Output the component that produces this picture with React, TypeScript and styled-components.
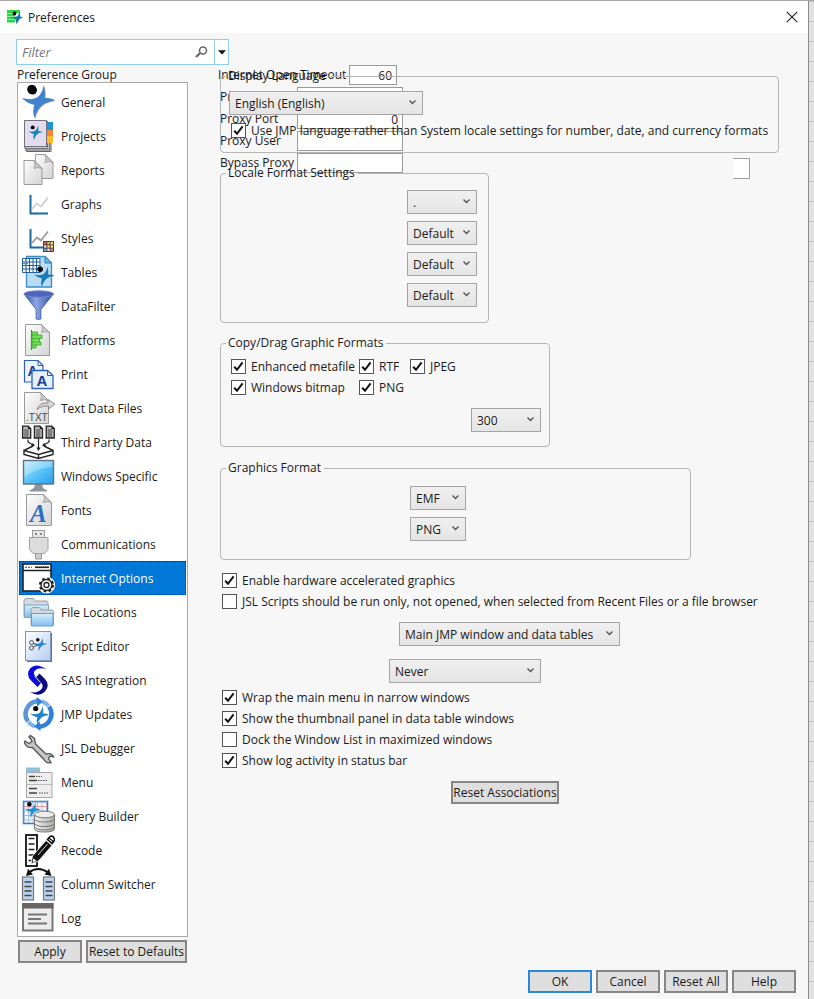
import React from "react";
import styled, { createGlobalStyle, css } from "styled-components";

const FONT = `"Open Sans", "Noto Sans", sans-serif`;

const GlobalStyle = createGlobalStyle`
  * { box-sizing: border-box; }
  html, body { margin: 0; padding: 0; }
  body, button, input, select {
    font-family: ${FONT};
    font-size: 12px;
    line-height: 18px;
    color: #1a1a1a;
  }
`;

/* ---------- window frame ---------- */

const Desktop = styled.div`
  display: flex;
  min-height: 100vh;
  border-top: 1px solid #a8a8a8;
  background: #f7f7f7;
`;

const Dialog = styled.main`
  flex: 1;
  min-width: 0;
  display: flex;
  flex-direction: column;
  background: #f7f7f7;
  border-right: 1px solid #8c8c8c;
`;

const SheetEdge = styled.div`
  width: 5px;
  background: repeating-linear-gradient(#c4c4c8 0 1px, #e2e2e2 1px 20px);
`;

const TitleBar = styled.header`
  display: flex;
  align-items: center;
  height: 32px;
  padding: 0 10px 0 7px;
  gap: 5px;
  background: #fff;
`;

const Title = styled.h1`
  flex: 1;
  margin: 0;
  padding-top: 1px;
  font-size: 12px;
  font-weight: 400;
  line-height: 18px;
`;

const CloseButton = styled.button`
  display: flex;
  padding: 0;
  border: 0;
  background: none;
`;

const FilterRow = styled.form`
  display: flex;
  width: 213px;
  height: 26px;
  margin: 6px 0 0 16px;
  border: 1px solid #90cdee;
  background: #fff;
`;

const FilterInput = styled.input`
  flex: 1;
  min-width: 0;
  padding: 0 5px;
  border: 0;
  background: none;
  font-size: 13px;
  font-style: italic;
  outline: none;
  &::placeholder { color: #757575; opacity: 1; }
`;

const FilterButton = styled.button<{ $divided?: boolean }>`
  display: flex;
  align-items: center;
  justify-content: center;
  width: ${(p) => (p.$divided ? "14px" : "26px")};
  padding: 0;
  border: 0;
  background: none;
  ${(p) => p.$divided && css`border-left: 1px solid #90cdee;`}
`;

const Columns = styled.div`
  flex: 1;
  display: flex;
  align-items: flex-start;
  gap: 32px;
  padding: 0 13px 0 17px;
`;

/* ---------- navigation ---------- */

const Sidebar = styled.nav`
  flex: none;
  width: 171px;
`;

const SidebarLabel = styled.div`
  height: 17px;
  line-height: 19px;
`;

const GroupList = styled.ul`
  margin: 0;
  padding: 2px 1px 1px;
  list-style: none;
  border: 1px solid #a9a9a9;
  background: #fff;
`;

const GroupItem = styled.button<{ $selected?: boolean }>`
  display: flex;
  align-items: center;
  gap: 6px;
  width: 100%;
  height: 34px;
  padding: 2px 0 0 2px;
  border: 0;
  background: ${(p) => (p.$selected ? "#0078d7" : "transparent")};
  color: ${(p) => (p.$selected ? "#fff" : "#1a1a1a")};
  outline: ${(p) => (p.$selected ? "1px dotted #10263c" : "none")};
  outline-offset: -1px;
  text-align: left;
  white-space: nowrap;
`;

const IconBox = styled.svg`
  flex: none;
  align-self: flex-end;
  width: 34px;
  height: 34px;
`;

const ButtonRow = styled.div`
  display: flex;
  gap: 4px;
  padding: 3px 1px 0;
`;

const PushButton = styled.button<{ $width: number; $primary?: boolean }>`
  width: ${(p) => p.$width}px;
  height: 23px;
  padding: 0;
  border: 2px solid ${(p) => (p.$primary ? "#2a88dc" : "#868686")};
  background: #dfdfdf;
  white-space: nowrap;
`;

const Footer = styled.footer`
  display: flex;
  justify-content: flex-end;
  gap: 4px;
  padding: 7px 12px 6px;
`;

/* ---------- settings ---------- */

const Settings = styled.section`
  flex: 1;
  min-width: 0;
  position: relative;
`;

const ProxyLayer = styled.div`
  position: absolute;
  top: 0;
  left: 0;
  display: flex;
  flex-direction: column;
  gap: 2px;
`;

const ProxyRow = styled.label<{ $first?: boolean }>`
  display: flex;
  align-items: center;
  height: 20px;
  margin-left: ${(p) => (p.$first ? "-2px" : "0")};
`;

const ProxyName = styled.span<{ $first?: boolean }>`
  width: ${(p) => (p.$first ? "131px" : "77px")};
  white-space: nowrap;
`;

const ProxyInput = styled.input<{ $short?: boolean }>`
  width: ${(p) => (p.$short ? "48px" : "106px")};
  height: 20px;
  padding: 0 4px;
  border: 1px solid #9a9a9a;
  background: #fff;
  text-align: right;
`;

const Content = styled.div`
  position: relative;
  z-index: 1;
  display: flex;
  flex-direction: column;
  align-items: flex-start;
`;

const Group = styled.fieldset<{ $width: number; $top: number; $pad: string }>`
  width: 100%;
  max-width: ${(p) => p.$width}px;
  min-width: 0;
  margin: ${(p) => p.$top}px 0 0;
  padding: ${(p) => p.$pad};
  border: 1px solid #b6b6b6;
  border-radius: 4px;
`;

const GroupTitle = styled.legend`
  margin-left: -3px;
  padding: 0 3px 0 2px;
  line-height: 18px;
  white-space: nowrap;
`;

const LocaleRow = styled.div`
  display: flex;
  align-items: flex-start;
  width: 100%;
`;

const ClippedInput = styled.input`
  width: 17px;
  height: 21px;
  margin: 5px 0 0 244px;
  padding: 0;
  border: 1px solid #a0a0a0;
  border-left: 0;
  background: #fff;
`;

const Stack = styled.div`
  display: flex;
  flex-direction: column;
  align-items: flex-start;
  gap: 7px;
`;

const SelectFrame = styled.span<{ $width: number }>`
  position: relative;
  display: block;
  width: ${(p) => p.$width}px;
  height: 24px;
  svg {
    position: absolute;
    top: 8px;
    right: 6px;
    pointer-events: none;
  }
`;

const SelectControl = styled.select`
  appearance: none;
  display: block;
  width: 100%;
  height: 100%;
  padding: 1px 0 0 5px;
  border: 1px solid #a5a5a5;
  border-radius: 0;
  background: linear-gradient(#f0f0f0, #e5e5e5);
`;

const CheckLabel = styled.label`
  display: flex;
  align-items: center;
  gap: 5px;
  height: 21px;
  white-space: nowrap;
`;

const CheckFrame = styled.span`
  position: relative;
  display: block;
  width: 15px;
  height: 15px;
  svg {
    position: absolute;
    inset: 0;
    visibility: hidden;
    pointer-events: none;
  }
  input:checked + svg { visibility: visible; }
`;

const CheckInput = styled.input`
  appearance: none;
  display: block;
  width: 15px;
  height: 15px;
  margin: 0;
  border: 1px solid #555;
  background: #fff;
`;

const LanguageBody = styled.div`
  display: flex;
  flex-direction: column;
  gap: 5px;
`;

const CheckInset = styled.div`
  padding-left: 2px;
`;

const FormatGrid = styled.div`
  display: grid;
  grid-template-columns: 128px 51px auto;
  justify-content: start;
  padding: 0 0 10px 2px;
`;

const Indent = styled.div<{ $left: number; $top?: number }>`
  margin: ${(p) => p.$top ?? 0}px 0 0 ${(p) => p.$left}px;
`;

const CheckStack = styled.div<{ $top: number }>`
  margin: ${(p) => p.$top}px 0 0 2px;
`;

function Select({ width, value, label }: { width: number; value: string; label: string }) {
  return (
    <SelectFrame $width={width}>
      <SelectControl aria-label={label} defaultValue={value}>
        <option>{value}</option>
      </SelectControl>
      <svg width="9" height="7" viewBox="0 0 9 7" aria-hidden="true">
        <path d="M1.5 1.5 4.5 4.5 7.5 1.5" fill="none" stroke="#555" strokeWidth="1.4" />
      </svg>
    </SelectFrame>
  );
}

function Check({ text, on = true }: { text: string; on?: boolean }) {
  return (
    <CheckLabel>
      <CheckFrame>
        <CheckInput type="checkbox" defaultChecked={on} />
        <svg width="15" height="15" viewBox="0 0 15 15" aria-hidden="true">
          <path d="M3.2 7.8 6 10.8 11.6 3.4" fill="none" stroke="#111" strokeWidth="2" />
        </svg>
      </CheckFrame>
      {text}
    </CheckLabel>
  );
}

/* ---------- icons, drawn in a 34 x 34 box ---------- */

function Figure({ at, fill = "#3f7fc9" }: { at?: string; fill?: string }) {
  return (
    <g transform={at}>
      <path
        d="M1 13Q13 16 18 11Q22 6 22.5 0Q24.5 7 23.5 13Q29 12.5 34 15Q26 16.5 22 19Q15.5 24 13.5 33Q11 26 13.5 19.5Q6 18 1 13Z"
        fill={fill}
      />
      <circle cx="10.7" cy="4.3" r="4.5" fill="#050505" />
    </g>
  );
}

function Page({ x, y, w, h, id }: { x: number; y: number; w: number; h: number; id: string }) {
  const f = 8;
  return (
    <g>
      <linearGradient id={id} x1="0" y1="0" x2="1" y2="1">
        <stop offset="0" stopColor="#fdfdfd" />
        <stop offset="1" stopColor="#d4d4d4" />
      </linearGradient>
      <path
        d={`M${x} ${y}h${w - f}l${f} ${f}v${h - f}h${-w}z`}
        fill={`url(#${id})`}
        stroke="#9a9a9a"
        strokeWidth="1"
      />
      <path d={`M${x + w - f} ${y}q2 4 0 ${f}q4-2 ${f} 0z`} fill="#c9c9c9" stroke="#8e8e8e" strokeWidth=".7" />
    </g>
  );
}

const AXES = <path d="M9.5 8V26.5H27" fill="none" stroke="#176a9c" strokeWidth="2" />;

const grid = (x: number, y: number, w: number, h: number, s: number) => {
  let d = "";
  for (let i = x; i <= x + w; i += s) d += `M${i} ${y}v${h}`;
  for (let j = y; j <= y + h; j += s) d += `M${x} ${j}h${w}`;
  return d;
};

const ICONS: Record<string, React.ReactNode> = {
  General: (
    <>
      <Figure at="translate(.8 .8)" fill="#8b97a8" />
      <Figure fill="#3f82d0" />
    </>
  ),
  Projects: (
    <>
      <path d="M3.5 28l2 4.5H30V6L26 2z" fill="#c8c8c8" stroke="#666" />
      <path d="M4 29.5h22.5V4M5 31h23.5V5" fill="none" stroke="#777" />
      <rect x="26" y="3" width="6" height="8" fill="#2293d6" />
      <rect x="26" y="11" width="6" height="6" fill="#f58634" />
      <rect x="26" y="17" width="6" height="7" fill="#fdbb2c" />
      <rect x="3.5" y="1.5" width="22" height="26" fill="#e2dcec" stroke="#77727f" />
      <Figure at="translate(7 6.5) scale(.44)" fill="#1583bb" />
    </>
  ),
  Reports: (
    <>
      <Page x={14.5} y={1.5} w={17.5} h={24} id="rep1" />
      <Page x={3} y={7.5} w={18} h={24} id="rep2" />
    </>
  ),
  Graphs: (
    <>
      {AXES}
      <path d="M11 22l5-5.5 4 3L27 10.5" fill="none" stroke="#c9c9c9" strokeWidth="1.5" />
    </>
  ),
  Styles: (
    <>
      {AXES}
      <path d="M11 22l5-5.5 4 3L27 10.5" fill="none" stroke="#999" strokeWidth="1.7" />
      <rect x="22" y="20" width="11" height="11" fill="#4a4343" />
      {[
        ["#e05a4c", "#f2a74b", "#f7e36b"],
        ["#ddd", "#f0cf5b", "#efdc84"],
        ["#7d9fe0", "#e8e8e8", "#e6806e"],
      ].map((row, r) =>
        row.map((c, i) => <rect key={`${r}${i}`} x={23 + i * 3.3} y={21 + r * 3.3} width="2.4" height="2.4" fill={c} />)
      )}
    </>
  ),
  Tables: (
    <>
      <path d="M5.5 1.5H24L30.5 8V32H5.5z" fill="#b9dcf5" stroke="#3b8cc8" strokeWidth="1.3" />
      <path d="M24 1.5V8h6.5z" fill="#6fb3e0" stroke="#2f7fb9" />
      <rect x="1" y="3" width="19" height="15" fill="#fff" />
      <path d={grid(1.5, 3.5, 18, 14, 3.5)} stroke="#1f5f9c" strokeWidth="1" fill="none" />
      <path d="M2 8.5h5M4.500 4v8" stroke="#e25b5b" />
      <Figure at="translate(12.5 11.5) scale(.62)" fill="#1a79b5" />
    </>
  ),
  DataFilter: (
    <>
      <linearGradient id="fun" x1="0" x2="1">
        <stop offset="0" stopColor="#2f4f9f" />
        <stop offset=".4" stopColor="#8fa6e4" />
        <stop offset="1" stopColor="#2f4fa6" />
      </linearGradient>
      <path d="M3 5L15 20.5V30q2.5 1 5 0V20.5L32.5 5z" fill="url(#fun)" stroke="#3c56a3" strokeWidth=".7" />
      <ellipse cx="17.7" cy="5" rx="14.8" ry="3.2" fill="#4c66bb" stroke="#7288c9" />
    </>
  ),
  Platforms: (
    <>
      <Page x={4.5} y={1.5} w={24} h={31} id="pla" />
      <path d="M10.5 7v20" stroke="#2f9a2b" strokeWidth="1.2" />
      <path d="M11 9h5.5v3H21v3.5h-2.5V19H20v3h-5v3h-4z" fill="#76df57" stroke="#3cae33" strokeWidth=".9" />
      <path d="M11 12h6M11 15.5h8M11 19h8M11 22h5" stroke="#3cae33" strokeWidth=".9" />
    </>
  ),
  Print: (
    <>
      <path d="M3.5 3.5H17l5 5v16.5H3.5z" fill="#eef4ff" stroke="#2e5fbb" strokeWidth="1.2" />
      <path d="M17 3.5v5h5" fill="none" stroke="#2e5fbb" />
      <text x="6.5" y="19" fontFamily="Liberation Sans" fontWeight="700" fontSize="14" fill="#173f8f">A</text>
      <path d="M11 13.5H26.500l5.500 5V31.500H11z" fill="#e6f0ff" stroke="#2e5fbb" strokeWidth="1.3" />
      <path d="M26.5 13.5v5H32" fill="none" stroke="#2e5fbb" />
      <text x="15.5" y="29" fontFamily="Liberation Sans" fontWeight="700" fontSize="15" fill="#173f8f">A</text>
    </>
  ),
  "Text Data Files": (
    <>
      <Page x={3.5} y={1.5} w={24} h={31} id="txt" />
      <path d="M16 18.5Q18 11.5 27 12V8.500L34 13l-6.500 5V15Q20 14.500 16 18.500Z" fill="#d8d8d8" stroke="#777" strokeWidth=".8" />
      <text x="5" y="29.5" fontFamily="Liberation Sans" fontSize="10" fill="#4a4a4a">.TXT</text>
    </>
  ),
  "Third Party Data": (
    <>
      {[1, 12.8, 24.6].map((x) => (
        <g key={x} transform={`translate(${x} .5)`}>
          <path d="M.6.6h5.5l2.6 2.6V12.5H.6z" fill="#bbb" stroke="#222" strokeWidth="1.3" />
          <path d="M6 0v3.5h3.5" fill="#222" />
          <path d="M2.2 4.5h4.5M2.2 6.5h4.5M2.2 8.5h4.5M2.2 10.5h4.5" stroke="#333" strokeWidth=".9" />
        </g>
      ))}
      <path d="M7 14.5v2.5l5 3M28 14.5v2.5l-5 3M17.5 13.5V24" fill="none" stroke="#222" strokeWidth="1.2" />
      <path d="M14 21l-4 .3 1.8-3.5zM21 21l4 .3-1.8-3.5zM17.5 26l-2.200-3.500h4.400z" fill="#222" />
      <path d="M3 25.5l9-4.5M32 25.5L23 21M3 25.5l14.500 4L32 25.500v4L17.500 33.500 3 29.500zM17.500 29.500v4" fill="none" stroke="#222" strokeWidth="1.4" />
    </>
  ),
  "Windows Specific": (
    <>
      <linearGradient id="win" x1="0" y1="0" x2="1" y2="1">
        <stop offset="0" stopColor="#b8ecfd" />
        <stop offset=".5" stopColor="#5bc5f8" />
        <stop offset="1" stopColor="#2a9fee" />
      </linearGradient>
      <path d="M14 25h7l1 4 4 2.5v1H8.5v-1l4.5-2.5z" fill="#8c969e" />
      <rect x="2.5" y="1.5" width="30" height="23.5" fill="url(#win)" stroke="#62737f" strokeWidth="1.4" />
      <path d="M3.5 2.5h28V8Q14 9 3.5 18z" fill="#fff" opacity=".28" />
    </>
  ),
  Fonts: (
    <>
      <Page x={5.5} y={1.5} w={25} h={31} id="fon" />
      <text x="9" y="29" fontFamily="Liberation Serif" fontStyle="italic" fontWeight="700" fontSize="25" fill="#2b6fc6">A</text>
    </>
  ),
  Communications: (
    <>
      <path d="M14.5 25h6v7h-6z" fill="#cfcfcf" stroke="#999" />
      <rect x="11.5" y="3.5" width="12" height="8" fill="#e6e6e6" stroke="#999" />
      <path d="M14 6h2v2h-2zM19 6h2v2h-2z" fill="#888" />
      <path d="M8.5 10.5h18.5v12l-3.5 4H12l-3.500-4z" fill="#dcdcdc" stroke="#a2a2a2" />
    </>
  ),
  "Internet Options": (
    <>
      <rect x="2" y="3" width="28" height="27" fill="#fff" stroke="#222" strokeWidth="1.6" />
      <path d="M2 9.5h28" stroke="#222" strokeWidth="1.5" />
      <path d="M4 6.3h7" stroke="#444" strokeDasharray="2 1" />
      <path d="M14 6.3h14" stroke="#222" strokeWidth="1.6" />
      <circle cx="25.5" cy="24" r="8.6" fill="#fff" />
      <circle cx="25.5" cy="24" r="6.400" fill="none" stroke="#222" strokeWidth="2.4" strokeDasharray="2.600 2.426" />
      <circle cx="25.5" cy="24" r="5.500" fill="#fff" stroke="#222" strokeWidth="1.400" />
      <circle cx="25.5" cy="24" r="2.500" fill="#fff" stroke="#222" strokeWidth="1.300" />
    </>
  ),
  "File Locations": (
    <>
      <linearGradient id="fol" x1="0" y1="0" x2="0" y2="1">
        <stop offset="0" stopColor="#d9effc" />
        <stop offset="1" stopColor="#7fbdf0" />
      </linearGradient>
      <path d="M3 22V5l1.5-1.5h8L14 6h12l1 1.5V22z" fill="#d3d9dd" stroke="#98a2a9" />
      <path d="M3.5 10h24v12.500h-24z" fill="url(#fol)" stroke="#80a7c7" />
      <path d="M10 30V14l1.5-1.5h7L20 15h11.500l1 1.500V30z" fill="#d3d9dd" stroke="#98a2a9" />
      <path d="M10.5 18.5h21.500V31H10.500z" fill="url(#fol)" stroke="#6a9fce" />
    </>
  ),
  "Script Editor": (
    <>
      <linearGradient id="scr" x1="0" y1="0" x2="1" y2="1">
        <stop offset="0" stopColor="#fff" />
        <stop offset="1" stopColor="#b5cff2" />
      </linearGradient>
      <rect x="6" y="4" width="25" height="29" fill="#62729b" />
      <rect x="4.5" y="2.5" width="25" height="29" fill="url(#scr)" stroke="#8496bf" />
      <circle cx="10.5" cy="13.5" r="2" fill="none" stroke="#555" />
      <circle cx="10.5" cy="19" r="2" fill="none" stroke="#555" />
      <path d="M12 18l10-4M12 14.5l7 2.5" stroke="#555" />
      <Figure at="translate(12.5 9) scale(.4)" fill="#2a86c8" />
    </>
  ),
  "SAS Integration": (
    <>
      <path d="M25 6Q15 -.5 9.500 5Q4 11.500 10.500 18L16.500 24L20.500 19.500L14.500 13.500Q11.500 10 14 7.500Q17.500 4 25 6Z" fill="#0a0ae0" />
      <path d="M9 29Q18 34.500 24 28.500Q29.500 22 24 16L18.500 10.500L15 14.500L20 19.500Q23 23 20.500 26Q16.500 30.500 9 29Z" fill="#0b0b80" />
      <path d="M16.500 9.500L14 13.500 19.500 19.500" fill="none" stroke="#fff" strokeWidth=".9" />
    </>
  ),
  "JMP Updates": (
    <>
      <path d="M7 24.5A12.800 12.800 0 0 1 16.500 4.300" fill="none" stroke="#5b97d8" strokeWidth="4.600" />
      <path d="M28 9.500A12.800 12.800 0 0 1 18.500 29.700" fill="none" stroke="#2f7fdb" strokeWidth="4.600" />
      <path d="M7.500 25A12.800 12.800 0 0 0 14 29.500" fill="none" stroke="#7eb2ea" strokeWidth="4" />
      <path d="M27.500 9A12.800 12.800 0 0 0 21 4.500" fill="none" stroke="#7eb2ea" strokeWidth="4" />
      <path d="M15.500 0l6.500 4.500-6 5zM19.500 34l-6.500-4.500 6-5z" fill="#2f7fdb" />
      <Figure at="translate(8.500 9) scale(.58)" fill="#2383c4" />
    </>
  ),
  "JSL Debugger": (
    <path
      d="M9.500 4.500L13.500 7.500 14.500 13 25 23Q31 21.500 32.500 26L29 25 27.500 27.500 30 31.500Q25.500 33 22.500 28L11.500 16.500Q6 17.500 3.500 12L4 10 8 12.500 11 10.500 9.500 7.500 8 6z"
      fill="#c6c6c6"
      stroke="#5a5a5a"
      strokeWidth="1.400"
    />
  ),
  Menu: (
    <>
      <rect x="5" y="2.500" width="14" height="6" fill="#8fc1da" />
      <rect x="5.500" y="7.500" width="25.500" height="25" fill="#eee" stroke="#a9a9a9" />
      <path d="M6 19.500h25" stroke="#bbb" />
      <path d="M8 11.500h6M8 15.500h8M8 23.500h8M8 28h8" stroke="#444" strokeWidth="1.500" />
      <path d="M15 11.500h6M17 15.500h9M18 28h9" stroke="#555" strokeDasharray="1.500 1" />
    </>
  ),
  "Query Builder": (
    <>
      <linearGradient id="cyl" x1="0" x2="1">
        <stop offset="0" stopColor="#f5f5f5" />
        <stop offset="1" stopColor="#aaa" />
      </linearGradient>
      <rect x="2.500" y="2.500" width="24" height="22" fill="#f4faff" stroke="#2e7fc4" strokeWidth="1.600" />
      <path d={grid(3, 3, 23, 21, 4.5)} stroke="#a5a9cf" strokeWidth=".8" fill="none" />
      <path d="M3 7.500h23" stroke="#e59a9a" />
      <Figure at="translate(3 3) scale(.5)" fill="#2591d6" />
      <path d="M13.500 15.500v14q0 3.500 10 3.500t10-3.500v-14z" fill="url(#cyl)" stroke="#777" />
      <ellipse cx="23.500" cy="15.500" rx="10" ry="3.300" fill="#ededed" stroke="#777" />
      <path d="M13.500 20q2 3 10 3t10-3M13.500 24.500q2 3 10 3t10-3M13.500 28q2 3 10 3t10-3" fill="none" stroke="#777" />
    </>
  ),
  Recode: (
    <>
      <rect x="5" y="2" width="11" height="31" fill="#fff" stroke="#111" strokeWidth="1.800" />
      <path d="M7.500 5.500h6M7.500 11h6M7.500 16.500h6M7.500 22h6M7.500 27.500h3" stroke="#222" strokeWidth="1.300" />
      <path d="M10 31l1.500-8L25 7.500l6 5L17.500 28z" fill="#111" stroke="#fff" strokeWidth=".8" />
      <path d="M11.500 29.500l1-4 3 2.300z" fill="#fff" />
      <path d="M26.500 6.500l2.500-3q1.500-1 3 0l1 1.500q1 1.500 0 2.700l-2 2.800z" fill="#fff" stroke="#111" strokeWidth="1.600" />
      <path d="M28 5l5 4" stroke="#111" strokeWidth="1.200" />
      <path d="M17 22l9.500-11" stroke="#fff" strokeWidth=".8" />
    </>
  ),
  "Column Switcher": (
    <>
      {[1.5, 22.5].map((x) => (
        <g key={x}>
          <rect x={x} y="10" width="11" height="23" fill="#b9d2ee" stroke="#777" strokeWidth="1.200" />
          <path d={`M${x + 2} 15h7M${x + 2} 19.500h7M${x + 2} 24h7M${x + 2} 28.500h7`} stroke="#444" strokeWidth="1.500" />
        </g>
      ))}
      <path d="M8 5.500Q17 -1.500 27 5.500" fill="none" stroke="#111" strokeWidth="1.800" />
      <path d="M5 9L7 1.800l5 5.700zM30.500 9L28 1.800 23.500 7.500z" fill="#111" />
    </>
  ),
  Log: (
    <>
      <rect x="2" y="3" width="29.500" height="26.500" fill="#ededed" stroke="#777" strokeWidth="2" />
      <rect x="1" y="2" width="31.500" height="5.500" fill="#666" />
      <path d="M7 13.500h19M7 18h13M7 22.500h19" stroke="#777" strokeWidth="1.900" />
    </>
  ),
};

const SELECTED = "Internet Options";

export default function App() {
  return (
    <>
      <GlobalStyle />
      <Desktop>
        <Dialog>
          <TitleBar>
            <svg width="16" height="16" viewBox="0 0 16 16" aria-hidden="true">
              <path d="M0 1h13v3H0zM0 4.500h8v2.800H0zM0 7.800h10v2.800H0zM0 11h8v2.500H0z" fill="#2fd14b" />
              <path d="M4 7.500Q9 9 11 6.500L13 2.500 13.200 7.500 16 8.500 12.500 10 9.500 15.500 8.800 10.300Z" fill="#1573b5" />
              <circle cx="7.500" cy="4.500" r="1.900" fill="#050505" />
            </svg>
            <Title>Preferences</Title>
            <CloseButton type="button" aria-label="Close">
              <svg width="12" height="12" viewBox="0 0 12 12">
                <path d="M.8.8 11.200 11.200M11.200.8.8 11.200" stroke="#222" strokeWidth="1.100" />
              </svg>
            </CloseButton>
          </TitleBar>

          <FilterRow onSubmit={(e) => e.preventDefault()}>
            <FilterInput placeholder="Filter" aria-label="Filter" />
            <FilterButton type="submit" aria-label="Search">
              <svg width="13" height="12" viewBox="0 0 13 12">
                <circle cx="8" cy="4.500" r="3.500" fill="none" stroke="#666" strokeWidth="1.600" />
                <path d="M5.300 7 1 11" stroke="#666" strokeWidth="2.200" />
              </svg>
            </FilterButton>
            <FilterButton type="button" $divided aria-label="Filter options">
              <svg width="8" height="5" viewBox="0 0 8 5">
                <path d="M0 .3h8L4 4.500z" fill="#111" />
              </svg>
            </FilterButton>
          </FilterRow>

          <Columns>
            <Sidebar>
              <SidebarLabel>Preference Group</SidebarLabel>
              <GroupList>
                {Object.keys(ICONS).map((name) => (
                  <li key={name}>
                    <GroupItem type="button" $selected={name === SELECTED}>
                      <IconBox viewBox="0 0 34 34" aria-hidden="true">{ICONS[name]}</IconBox>
                      {name}
                    </GroupItem>
                  </li>
                ))}
              </GroupList>
              <ButtonRow>
                <PushButton type="button" $width={64}>Apply</PushButton>
                <PushButton type="button" $width={101}>Reset to Defaults</PushButton>
              </ButtonRow>
            </Sidebar>

            <Settings>
              <ProxyLayer>
                <ProxyRow $first>
                  <ProxyName $first>Internet Open Timeout</ProxyName>
                  <ProxyInput $short defaultValue="60" />
                </ProxyRow>
                {[["Proxy Host", ""], ["Proxy Port", "0"], ["Proxy User", ""], ["Bypass Proxy", ""]].map(([name, value]) => (
                  <ProxyRow key={name}>
                    <ProxyName>{name}</ProxyName>
                    <ProxyInput defaultValue={value} />
                  </ProxyRow>
                ))}
              </ProxyLayer>

              <Content>
                <Group $width={559} $top={2} $pad="6px 8px 11px">
                  <GroupTitle>Display Language</GroupTitle>
                  <LanguageBody>
                    <Select width={194} value="English (English)" label="Display Language" />
                    <CheckInset>
                      <Check text="Use JMP language rather than System locale settings for number, date, and currency formats" />
                    </CheckInset>
                  </LanguageBody>
                </Group>

                <LocaleRow>
                  <Group $width={269} $top={11} $pad="8px 8px 15px">
                    <GroupTitle>Locale Format Settings</GroupTitle>
                    <Indent $left={178}>
                      <Stack>
                        <Select width={70} value="." label="Decimal separator" />
                        <Select width={70} value="Default" label="Date format" />
                        <Select width={70} value="Default" label="Time format" />
                        <Select width={70} value="Default" label="Currency format" />
                      </Stack>
                    </Indent>
                  </Group>
                  <ClippedInput aria-label="Value" />
                </LocaleRow>

                <Group $width={330} $top={11} $pad="4px 8px 14px">
                  <GroupTitle>Copy/Drag Graphic Formats</GroupTitle>
                  <FormatGrid>
                    <Check text="Enhanced metafile" />
                    <Check text="RTF" />
                    <Check text="JPEG" />
                    <Check text="Windows bitmap" />
                    <Check text="PNG" />
                  </FormatGrid>
                  <Indent $left={242}>
                    <Select width={70} value="300" label="Resolution" />
                  </Indent>
                </Group>

                <Group $width={471} $top={12} $pad="9px 8px 18px">
                  <GroupTitle>Graphics Format</GroupTitle>
                  <Indent $left={181}>
                    <Stack>
                      <Select width={56} value="EMF" label="Vector format" />
                      <Select width={56} value="PNG" label="Bitmap format" />
                    </Stack>
                  </Indent>
                </Group>

                <CheckStack $top={10}>
                  <Check text="Enable hardware accelerated graphics" />
                  <Check text="JSL Scripts should be run only, not opened, when selected from Recent Files or a file browser" on={false} />
                </CheckStack>
                <Indent $left={179} $top={10}>
                  <Select width={221} value="Main JMP window and data tables" label="Windows shown" />
                </Indent>
                <Indent $left={169} $top={13}>
                  <Select width={152} value="Never" label="Automatic update" />
                </Indent>
                <CheckStack $top={4}>
                  <Check text="Wrap the main menu in narrow windows" />
                  <Check text="Show the thumbnail panel in data table windows" />
                  <Check text="Dock the Window List in maximized windows" on={false} />
                  <Check text="Show log activity in status bar" />
                </CheckStack>
                <Indent $left={231} $top={10}>
                  <PushButton type="button" $width={108}>Reset Associations</PushButton>
                </Indent>
              </Content>
            </Settings>
          </Columns>

          <Footer>
            <PushButton type="button" $width={64} $primary>OK</PushButton>
            <PushButton type="button" $width={64}>Cancel</PushButton>
            <PushButton type="button" $width={64}>Reset All</PushButton>
            <PushButton type="button" $width={64}>Help</PushButton>
          </Footer>
        </Dialog>
        <SheetEdge />
      </Desktop>
    </>
  );
}
